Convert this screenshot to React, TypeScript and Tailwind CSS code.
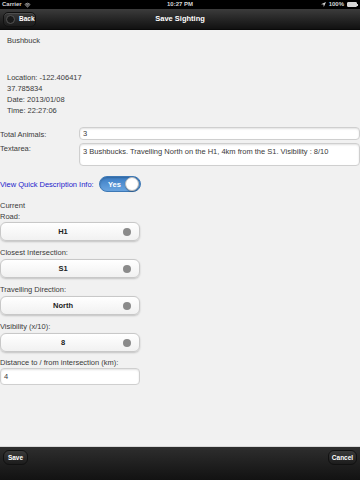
import { Wifi } from "lucide-react";

const font = { fontFamily: '"Liberation Sans", Arial, sans-serif' };

const selects = [
  { label: "Closest Intersection:", value: "S1" },
  { label: "Travelling Direction:", value: "North" },
  { label: "Visibility (x/10):", value: "8" },
];

const SelectButton = ({ value }: { value: string }) => (
  <div className="relative flex h-[19px] w-[140px] items-center rounded-[6px] border border-[#c8c8c8] bg-gradient-to-b from-white to-[#f1f1f1] pl-[6px] pr-[20px] shadow-[0_1px_2px_rgba(0,0,0,0.2)]">
    <span className="flex-1 text-center text-[7.5px] font-bold text-[#222]">{value}</span>
    <span className="absolute right-[8px] top-[5px] h-[8px] w-[8px] rounded-full bg-[#8a8a8a]" />
  </div>
);

export default function App() {
  return (
    <div className="flex h-[480px] w-[360px] flex-col bg-[#f1f1f1]" style={font}>
      {/* status bar */}
      <div className="relative flex h-[9px] items-center justify-between bg-black px-[2px] text-[6px] font-bold text-[#d6d6d6]">
        <div className="flex items-center gap-[2px]">
          <span>Carrier</span>
          <Wifi className="h-[6px] w-[7px]" strokeWidth={3} />
        </div>
        <span className="absolute left-1/2 -translate-x-1/2">10:27 PM</span>
        <div className="flex items-center gap-[3px]">
          <svg viewBox="0 0 10 10" className="h-[5px] w-[5px]">
            <path d="M10 0 L0 4.5 L5 5 L5.5 10 Z" fill="#d6d6d6" />
          </svg>
          <span>100%</span>
          <div className="flex items-center">
            <div className="h-[5px] w-[10px] rounded-[1px] border border-[#d6d6d6] bg-[#d6d6d6]" />
            <div className="h-[2px] w-[1px] bg-[#d6d6d6]" />
          </div>
        </div>
      </div>

      {/* nav bar */}
      <div className="relative flex h-[21px] items-center border-b border-[#0a0a0a] bg-gradient-to-b from-[#3c3c3c] to-[#111] px-[3px]">
        <div className="flex h-[15px] w-[33px] items-center gap-[4px] rounded-[5px] border border-[#111] bg-gradient-to-b from-[#3a3a3a] to-[#1c1c1c] pl-[2px] shadow-[inset_0_1px_0_rgba(255,255,255,0.1)]">
          <span className="h-[9px] w-[9px] rounded-full border border-[#555] bg-[#1a1a1a]" />
          <span className="text-[6.5px] font-bold text-white">Back</span>
        </div>
        <span className="absolute left-1/2 -translate-x-1/2 text-[7.5px] font-bold text-white">Save Sighting</span>
      </div>

      {/* content */}
      <div className="flex-1 text-[7.5px] leading-[11px] text-[#3a3a3a]">
        <div className="px-[7px] pt-[5px]">
          <div>Bushbuck</div>
          <div className="mt-[26px]">
            <div>Location: -122.406417</div>
            <div>37.785834</div>
            <div>Date: 2013/01/08</div>
            <div>Time: 22:27:06</div>
          </div>
        </div>

        <div className="mt-[11px] flex items-start">
          <div className="w-[79px] pt-[2px]">Total Animals:</div>
          <div className="flex h-[13px] flex-1 items-center rounded-[4px] border border-[#cfcfcf] bg-white px-[3px] shadow-[inset_0_1px_2px_rgba(0,0,0,0.12)]">
            3
          </div>
        </div>
        <div className="mt-[3px] flex items-start">
          <div className="w-[79px]">Textarea:</div>
          <div className="h-[23px] flex-1 rounded-[4px] border border-[#cfcfcf] bg-white px-[3px] pt-[2px] shadow-[inset_0_1px_2px_rgba(0,0,0,0.12)]">
            3 Bushbucks. Travelling North on the H1, 4km from the S1. Visibility : 8/10
          </div>
        </div>

        <div className="mt-[10px] flex items-center">
          <span className="w-[99px] text-[#2222cc]">View Quick Description Info:</span>
          <div className="flex h-[16px] w-[42px] items-center rounded-full border border-[#3d78b5] bg-gradient-to-b from-[#3b7dc4] to-[#6aa5e0] pl-[8px] pr-[1px] shadow-[inset_0_1px_2px_rgba(0,0,0,0.2)]">
            <span className="flex-1 font-bold text-white">Yes</span>
            <span className="h-[14px] w-[14px] rounded-full border border-[#bbb] bg-white shadow-[0_1px_1px_rgba(0,0,0,0.25)]" />
          </div>
        </div>

        <div className="mt-[8px]">Current</div>
        <div>Road:</div>
        <SelectButton value="H1" />

        {selects.map((s) => (
          <div key={s.label}>
            <div className="mt-[6px] mb-[1px]">{s.label}</div>
            <SelectButton value={s.value} />
          </div>
        ))}

        <div className="mt-[5px]">Distance to / from intersection (km):</div>
        <div className="flex h-[17px] w-[140px] items-center rounded-[4px] border border-[#cfcfcf] bg-white px-[3px] shadow-[inset_0_1px_2px_rgba(0,0,0,0.12)]">
          4
        </div>
      </div>

      {/* footer */}
      <div className="flex h-[34px] items-start justify-between border-t border-[#d8d8d8] bg-gradient-to-b from-[#2e2e2e] to-[#121212] px-[3px] pt-[3px]">
        <div className="flex h-[15px] w-[25px] items-center justify-center rounded-[6px] border border-[#111] bg-gradient-to-b from-[#3a3a3a] to-[#1c1c1c] text-[6.5px] font-bold text-white">
          Save
        </div>
        <div className="flex h-[15px] w-[29px] items-center justify-center rounded-[6px] border border-[#111] bg-gradient-to-b from-[#3a3a3a] to-[#1c1c1c] text-[6.5px] font-bold text-white">
          Cancel
        </div>
      </div>
    </div>
  );
}
